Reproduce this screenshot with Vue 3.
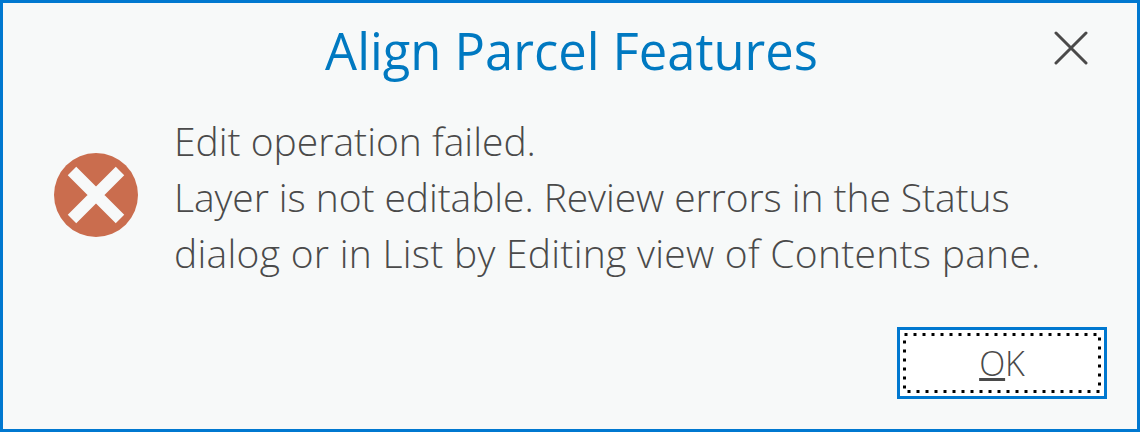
<script setup>
const title = 'Align Parcel Features'
const lines = [
  { text: 'Edit operation failed.', cls: 'line-a' },
  { text: 'Layer is not editable. Review errors in the Status', cls: 'line-b' },
  { text: 'dialog or in List by Editing view of Contents pane.', cls: 'line-c' }
]
</script>

<template>
  <div class="dialog">
    <header class="head">
      <h1 class="title">{{ title }}</h1>
      <button class="close" aria-label="Close">
        <svg width="34" height="34" viewBox="0 0 34 34">
          <path d="M2 2 L32 32 M32 2 L2 32" stroke="#4a4a4a" stroke-width="3" stroke-linecap="round" fill="none" />
        </svg>
      </button>
    </header>
    <main class="body">
      <svg class="icon" width="84" height="84" viewBox="0 0 84 84">
        <circle cx="42" cy="42" r="42" fill="#ca6d4e" />
        <path d="M18 18 L66 66 M66 18 L18 66" stroke="#f7f9f9" stroke-width="12" fill="none" />
      </svg>
      <div class="message">
        <p v-for="line in lines" :key="line.text" class="line" :class="line.cls">{{ line.text }}</p>
      </div>
    </main>
    <footer class="foot">
      <button class="ok">
        <svg class="focus" width="204" height="66" viewBox="0 0 204 66">
          <rect x="4.5" y="4.5" width="195" height="57" fill="none" stroke="#000" stroke-width="3" stroke-dasharray="3 6" />
        </svg>
        <span><u>O</u>K</span>
      </button>
    </footer>
  </div>
</template>

<style>
html, body { margin: 0; padding: 0; }
</style>

<style scoped>
.dialog {
  box-sizing: border-box;
  width: 1140px;
  height: 432px;
  border: 3px solid #0078d0;
  background: #f7f9f9;
  display: flex;
  flex-direction: column;
  font-family: "Open Sans", "Noto Sans", sans-serif;
  font-weight: 300;
  color: #4a4a4a;
}
.head {
  position: relative;
  height: 94px;
  display: flex;
  justify-content: center;
  align-items: center;
  padding-left: 3px;
}
.title {
  margin: 0;
  font-size: 50.7px;
  font-weight: 400;
  color: #0079c1;
}
.close {
  position: absolute;
  top: 28px;
  right: 49px;
  width: 34px;
  height: 34px;
  padding: 0;
  border: 0;
  background: none;
  display: flex;
}
.body {
  display: flex;
  align-items: center;
  gap: 36px;
  padding: 0 0 0 51px;
  height: 168px;
  margin-top: 14px;
}
.icon { flex: none; }
.message { margin-top: 3px; }
.line {
  margin: 0;
  font-size: 39px;
  line-height: 56px;
  white-space: nowrap;
}
.line-b { letter-spacing: -0.08px; }
.line-c { letter-spacing: 0.27px; }
.foot {
  flex: 1;
  display: flex;
  justify-content: flex-end;
  align-items: flex-start;
  padding: 48px 30px 0 0;
}
.ok {
  position: relative;
  box-sizing: border-box;
  width: 210px;
  height: 72px;
  border: 3px solid #0078d0;
  background: #fff;
  padding: 0;
  font: inherit;
  font-size: 34px;
  color: #4a4a4a;
}
.focus {
  position: absolute;
  left: 0;
  top: 0;
}
</style>
